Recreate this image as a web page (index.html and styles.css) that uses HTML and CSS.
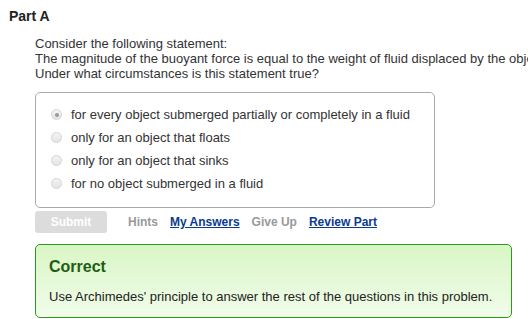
FILE: index.html
```html
<!DOCTYPE html>
<html>
<head>
<meta charset="utf-8">
<link rel="stylesheet" href="styles.css">
</head>
<body>
<div class="page">
  <h2 class="part-title">Part A</h2>
  <div class="part-body">
    <div class="prompt">
      <div class="line">Consider the following statement:</div>
      <div class="line">The magnitude of the buoyant force is equal to the weight of fluid displaced by the object.</div>
      <div class="line">Under what circumstances is this statement true?</div>
    </div>
    <div class="choices">
      <div class="choice"><span class="radio checked"></span><span>for every object submerged partially or completely in a fluid</span></div>
      <div class="choice"><span class="radio"></span><span>only for an object that floats</span></div>
      <div class="choice"><span class="radio"></span><span>only for an object that sinks</span></div>
      <div class="choice"><span class="radio"></span><span>for no object submerged in a fluid</span></div>
    </div>
    <div class="actions">
      <span class="submit">Submit</span>
      <span class="act muted">Hints</span>
      <a class="act link">My Answers</a>
      <span class="act muted">Give Up</span>
      <a class="act link">Review Part</a>
    </div>
    <div class="feedback">
      <div class="fb-title">Correct</div>
      <div class="fb-text">Use Archimedes' principle to answer the rest of the questions in this problem.</div>
    </div>
  </div>
</div>
</body>
</html>
```
FILE: styles.css
```css
html, body {
  margin: 0;
  padding: 0;
  background: #fff;
  overflow: hidden;
  width: 528px;
  height: 319px;
}
body {
  font-family: "Liberation Sans", Arial, sans-serif;
  font-size: 13px;
  color: #333;
}
.page {
  padding: 9px 0 0 9px;
}
.part-title {
  margin: 0;
  font-size: 14px;
  font-weight: bold;
  color: #222;
  line-height: 14px;
}
.part-body {
  margin-left: 26px;
  padding-top: 13px;
}
.prompt .line {
  line-height: 15px;
  white-space: nowrap;
}
.choices {
  margin-top: 11px;
  width: 400px;
  border: 1px solid #aaa;
  border-radius: 5px;
  padding: 10px 0 0 15px;
  box-sizing: border-box;
  height: 116px;
}
.choice {
  display: flex;
  align-items: center;
  height: 23px;
  gap: 9px;
}
.radio {
  width: 11px;
  height: 11px;
  border-radius: 50%;
  border: 1px solid #d4d4d4;
  background: linear-gradient(#f4f4f4, #e4e4e4);
  box-sizing: border-box;
  position: relative;
  flex: none;
}
.radio.checked::after {
  content: "";
  position: absolute;
  left: 2.5px;
  top: 2.5px;
  width: 4px;
  height: 4px;
  border-radius: 50%;
  background: #9a9a9a;
}
.actions {
  display: flex;
  align-items: center;
  margin-top: 3px;
  height: 22px;
}
.submit {
  display: inline-block;
  width: 72px;
  height: 22px;
  line-height: 22px;
  text-align: center;
  background: #dcdcdc;
  color: #fff;
  font-weight: bold;
  border-radius: 3px;
  font-size: 12px;
  margin-right: 21px;
}
.act {
  font-weight: bold;
  font-size: 12px;
  margin-right: 12px;
}
.muted {
  color: #999;
}
.link {
  color: #0b3a8f;
  text-decoration: underline;
}
.feedback {
  margin-top: 11px;
  width: 477px;
  height: 74px;
  box-sizing: border-box;
  border: 1px solid #2a9a1a;
  border-radius: 5px;
  background: linear-gradient(#d9f6c6, #f1fcea);
  padding: 13px 0 0 13px;
}
.fb-title {
  font-size: 16px;
  font-weight: bold;
  color: #1f5e12;
  line-height: 18px;
}
.fb-text {
  margin-top: 13px;
  color: #222;
  line-height: 15px;
}
```
